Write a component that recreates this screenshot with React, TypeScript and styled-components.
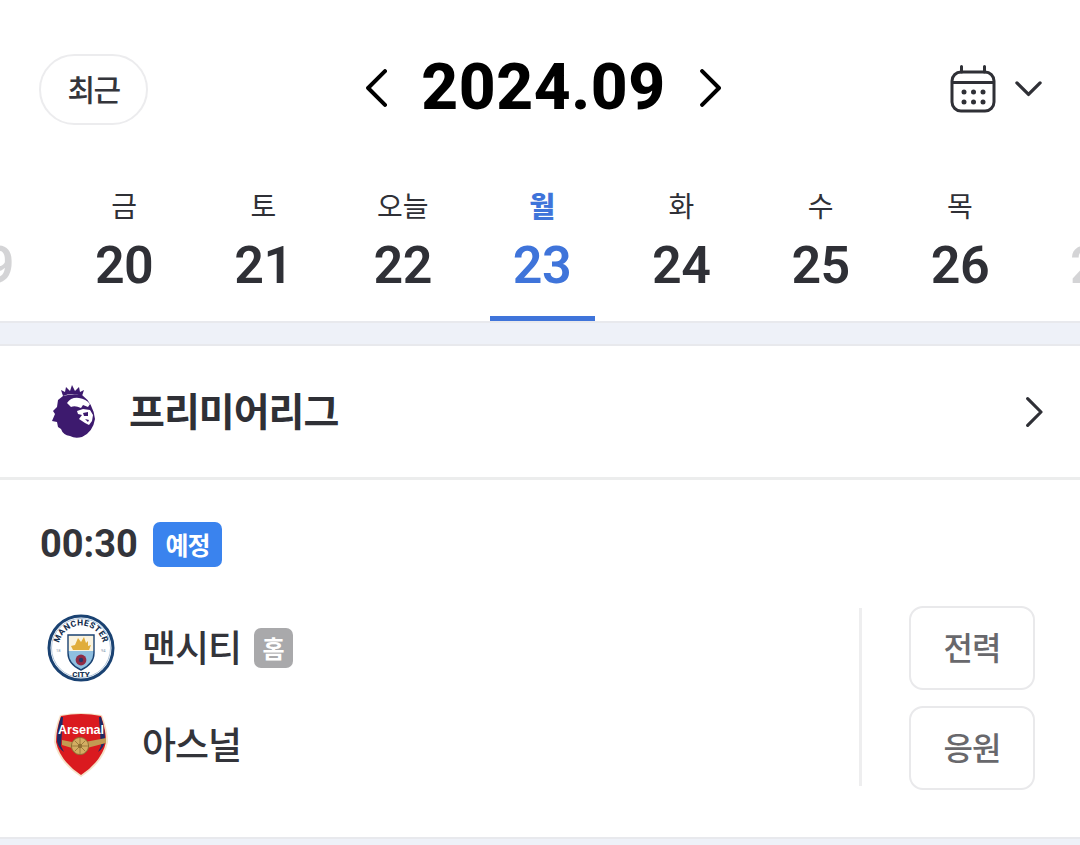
import React from 'react';
import styled, { createGlobalStyle } from 'styled-components';

const Global = createGlobalStyle`
  html, body { margin: 0; padding: 0; background: #fff; }
  body { font-family: Roboto, "Noto Sans CJK KR", sans-serif; width: 1080px; height: 845px; overflow: hidden; }
  * { box-sizing: border-box; }
`;

const Page = styled.div`
  width: 1080px;
  height: 845px;
  overflow: hidden;
  display: flex;
  flex-direction: column;
  background: #fff;
`;

const TopBar = styled.header`
  height: 178px;
  flex: none;
  padding: 54px 38px 0 39px;
  display: grid;
  grid-template-columns: 109px 1fr 92px;
  align-items: start;
`;

const RecentPill = styled.button`
  width: 109px;
  height: 71px;
  border: 2px solid #ececee;
  border-radius: 36px;
  background: #fff;
  color: #34353b;
  padding: 0 0 3px;
  font: 500 30px/1 "Noto Sans CJK KR", sans-serif;
  letter-spacing: -1.5px;
`;

const MonthNav = styled.div`
  display: flex;
  align-items: center;
  justify-content: center;
  height: 68px;
  gap: 34px;
  padding-right: 11px;
`;

const MonthTitle = styled.h1`
  margin: 0;
  font: 800 64px/68px Roboto, sans-serif;
  letter-spacing: 0.6px;
  color: #000;
`;

const CalendarControl = styled.div`
  display: flex;
  align-items: center;
  gap: 19px;
  height: 70px;
`;

const Strip = styled.nav`
  height: 143px;
  flex: none;
  display: flex;
  justify-content: center;
  padding-left: 4px;
  overflow: hidden;
`;

const DayCell = styled.div<{ $active?: boolean; $faded?: boolean }>`
  flex: 0 0 139.3px;
  height: 143px;
  display: flex;
  flex-direction: column;
  align-items: center;
  color: ${p => (p.$active ? '#3f74da' : '#2f3036')};
  opacity: ${p => (p.$faded ? 0.2 : 1)};
  position: relative;
`;

const DayName = styled.span<{ $active?: boolean }>`
  height: 40px;
  font: ${p => (p.$active ? 900 : 400)} 28px/40px "Noto Sans CJK KR", sans-serif;
  margin-top: 7px;
`;

const DayNumber = styled.span`
  font: 600 52px/60px Roboto, sans-serif;
  letter-spacing: -0.5px;
  margin-top: 11px;
`;

const ActiveBar = styled.i`
  position: absolute;
  left: 50%;
  bottom: 0;
  width: 105px;
  height: 5px;
  margin-left: -52.5px;
  background: #3f74da;
`;

const Band = styled.div<{ $h: number }>`
  height: ${p => p.$h}px;
  flex: none;
  background: #eef1f8;
  border-top: 2px solid #e8e9ed;
  border-bottom: 2px solid #e8e9ed;
`;

const LeagueRow = styled.section`
  height: 131px;
  flex: none;
  display: flex;
  align-items: center;
  padding: 0 37px 0 51px;
`;

const LeagueName = styled.h2`
  margin: 0 auto 0 33px;
  padding: 0 0 4px 1px;
  font: 700 39px/1 "Noto Sans CJK KR", sans-serif;
  letter-spacing: -1px;
  color: #2f3036;
`;

const Divider = styled.div`
  height: 3px;
  flex: none;
  background: #eceded;
`;

const Match = styled.section`
  height: 357px;
  flex: none;
  padding: 42px 45px 0 40px;
`;

const TimeRow = styled.div`
  display: flex;
  align-items: center;
  gap: 15px;
  height: 45px;
`;

const Time = styled.span`
  font: 700 38px/45px Roboto, sans-serif;
  color: #33343a;
`;

const StatusTag = styled.span`
  width: 69px;
  height: 45px;
  border-radius: 7px;
  background: #3a83ee;
  color: #fff;
  display: flex;
  align-items: center;
  justify-content: center;
  font: 700 25px/1 "Noto Sans CJK KR", sans-serif;
  letter-spacing: -1px;
`;

const MatchBody = styled.div`
  display: grid;
  grid-template-columns: 1fr 176px;
  margin-top: 41px;
`;

const Teams = styled.div`
  display: flex;
  flex-direction: column;
  gap: 31px;
  padding: 7px 0 0 7px;
  height: 180px;
`;

const Team = styled.div`
  display: flex;
  align-items: center;
  height: 66px;
`;

const CrestSlot = styled.div`
  width: 68px;
  display: flex;
  justify-content: center;
  flex: none;
`;

const TeamName = styled.span`
  margin-left: 27px;
  padding-bottom: 4px;
  font: 500 37px/1 "Noto Sans CJK KR", sans-serif;
  letter-spacing: -1px;
  color: #33343a;
`;

const HomeTag = styled.span`
  margin-left: 13px;
  width: 39px;
  height: 40px;
  border-radius: 7px;
  background: #a9a9ab;
  color: #fff;
  display: flex;
  align-items: center;
  justify-content: center;
  font: 700 24px/1 "Noto Sans CJK KR", sans-serif;
`;

const Actions = styled.div`
  border-left: 3px solid #eeeeef;
  height: 178px;
  padding-left: 47px;
  display: flex;
  flex-direction: column;
  gap: 16px;
`;

const ActionButton = styled.button`
  width: 126px;
  height: 84px;
  flex: none;
  border: 2px solid #e9e9eb;
  border-radius: 14px;
  background: #fff;
  color: #68686c;
  padding: 0 0 4px;
  font: 500 32px/1 "Noto Sans CJK KR", sans-serif;
  letter-spacing: -1px;
  &:first-child { margin-top: -2px; }
`;

const Chevron = ({ dir, size = 30, color = '#000' }: { dir: 'left' | 'right' | 'down'; size?: number; color?: string }) => {
  const d = dir === 'left' ? 'M18 2 L2 18 L18 34' : dir === 'right' ? 'M2 2 L18 18 L2 34' : 'M2 3 L14 15 L26 3';
  const vb = dir === 'down' ? '0 0 28 18' : '0 0 20 36';
  const w = dir === 'down' ? size : (size * 20) / 36;
  const h = dir === 'down' ? (size * 18) / 28 : size;
  return (
    <svg width={w} height={h} viewBox={vb} fill="none" stroke={color} strokeWidth={dir === 'down' ? 3.4 : 3.8} strokeLinecap="round" strokeLinejoin="round">
      <path d={d} />
    </svg>
  );
};

const CalendarIcon = () => (
  <svg width="46" height="48" viewBox="0 0 46 48" fill="none" stroke="#2f3036" strokeWidth="3">
    <rect x="2" y="7" width="42" height="39" rx="9" />
    <path d="M2 17.5 H44" />
    <path d="M11.5 1.5 V7 M34.5 1.5 V7" strokeLinecap="round" />
    <g fill="#2f3036" stroke="none">
      {[14, 23.5, 33].map(x => [27, 37].map(y => <circle key={`${x}-${y}`} cx={x} cy={y} r="2.5" />))}
    </g>
  </svg>
);

const LionLogo = () => (
  <svg width="44" height="54" viewBox="0 0 44 54">
    <path d="M10 5 L14 7 L15 2 L19 6 L21 0 L24 6 L28 2 L29 7 L33 5 L31 11 Q21 7 12 11 Z" fill="#3d1a6e" />
    <path d="M12 11 Q22 8 31 10 Q42 18 44 34 Q42 47 31 52 Q24 54 19 51 Q12 50 10 44 L7 42 L6 37 L1 36 L4 29 L2 26 L6 22 L7 15 Z" fill="#3d1a6e" />
    <path d="M16 18 Q20 12 28 13 Q35 14 39 19 L37 22 L32 20 L30 23 Q24 20 20 22 Z" fill="#fff" />
    <path d="M26 26 L32 24 L39 25 L42 30 L41 36 L38 40 L34 38 L28 34 L31 30 L27 29 Z" fill="#fff" />
    <path d="M32 28 L37 27 L37 31 L33 31 Z M34 34 L38 35 L37 37 Z" fill="#3d1a6e" />
  </svg>
);

const CityCrest = () => (
  <svg width="68" height="68" viewBox="0 0 68 68">
    <defs>
      <path id="mcTop" d="M11.5 34 A22.5 22.5 0 0 1 56.5 34" />
      <clipPath id="mcShield"><path d="M21 21 H47 V39 Q47 50 34 56 Q21 50 21 39 Z" /></clipPath>
    </defs>
    <circle cx="34" cy="34" r="32" fill="#fff" stroke="#1a4272" strokeWidth="3" />
    <circle cx="34" cy="34" r="29.5" fill="none" stroke="#9db8d2" strokeWidth="0.8" />
    <text fontFamily="Roboto, sans-serif" fontWeight="800" fontSize="8.4" fill="#16304f" letterSpacing="0.5">
      <textPath href="#mcTop" startOffset="50%" textAnchor="middle">MANCHESTER</textPath>
    </text>
    <text x="34" y="63" textAnchor="middle" fontFamily="Roboto, sans-serif" fontWeight="800" fontSize="8" fill="#16304f">CITY</text>
    <text x="9" y="38" fontFamily="Roboto, sans-serif" fontSize="4" fill="#7f97ad">18</text>
    <text x="54" y="38" fontFamily="Roboto, sans-serif" fontSize="4" fill="#7f97ad">94</text>
    <g clipPath="url(#mcShield)">
      <rect x="20" y="20" width="28" height="18" fill="#faf3df" />
      <rect x="20" y="37" width="28" height="21" fill="#8fbfe0" />
    </g>
    <path d="M21 21 H47 V39 Q47 50 34 56 Q21 50 21 39 Z" fill="none" stroke="#1a4272" strokeWidth="1.4" />
    <path d="M24 32 L26 36 H42 L44 31 L41 32 V27 L39 29 L37 23 L34 28 L31 24 L28 31 Z" fill="#e0ad3c" />
    <circle cx="34" cy="46" r="5.4" fill="#8f2b45" />
    <circle cx="34" cy="46" r="2.2" fill="#26396b" />
  </svg>
);

const ArsenalCrest = () => (
  <svg width="56" height="66" viewBox="0 0 56 66">
    <path d="M7 3 Q28 -1 49 3 Q55 18 55 30 Q51 50 28 65 Q5 50 1 30 Q1 18 7 3 Z" fill="#f5e2c8" />
    <path d="M8 4 Q28 0 48 4 Q53 18 53 30 Q49 49 28 63 Q7 49 3 30 Q3 18 8 4 Z" fill="#da1a1f" />
    <path d="M8 5 L10 5 L8 34 L11 40 Q5 36 4 29 Q4 16 8 5 Z M48 5 L46 5 L48 34 L45 40 Q51 36 52 29 Q52 16 48 5 Z" fill="#1e2a64" />
    <text x="28" y="22" textAnchor="middle" fontFamily="'Liberation Sans', sans-serif" fontWeight="700" fontSize="12.6" fill="#fff">Arsenal</text>
    <path d="M9 28 L19 30 H32 L53 26 V31 L34 36 H19 L9 33 Z" fill="#c29a52" />
    <circle cx="27" cy="34" r="8.6" fill="#d3ad63" stroke="#8f6e34" strokeWidth="1" />
    <circle cx="27" cy="34" r="2.2" fill="#8f6e34" />
    <path d="M27 26 V42 M19 34 H35 M21.5 28.5 L32.5 39.5 M32.5 28.5 L21.5 39.5" stroke="#8f6e34" strokeWidth="0.8" />
  </svg>
);

const days = [
  { name: '', num: '19', faded: true },
  { name: '금', num: '20' },
  { name: '토', num: '21' },
  { name: '오늘', num: '22' },
  { name: '월', num: '23', active: true },
  { name: '화', num: '24' },
  { name: '수', num: '25' },
  { name: '목', num: '26' },
  { name: '', num: '27', faded: true },
];

export default function App() {
  return (
    <Page>
      <Global />
      <TopBar>
        <RecentPill>최근</RecentPill>
        <MonthNav>
          <Chevron dir="left" size={38} />
          <MonthTitle>2024.09</MonthTitle>
          <Chevron dir="right" size={38} />
        </MonthNav>
        <CalendarControl>
          <CalendarIcon />
          <Chevron dir="down" size={27} color="#2f3036" />
        </CalendarControl>
      </TopBar>
      <Strip>
        {days.map(d => (
          <DayCell key={d.num} $active={d.active} $faded={d.faded}>
            <DayName $active={d.active}>{d.name}</DayName>
            <DayNumber>{d.num}</DayNumber>
            {d.active && <ActiveBar />}
          </DayCell>
        ))}
      </Strip>
      <Band $h={25} />
      <LeagueRow>
        <LionLogo />
        <LeagueName>프리미어리그</LeagueName>
        <Chevron dir="right" size={30} color="#2f3036" />
      </LeagueRow>
      <Divider />
      <Match>
        <TimeRow>
          <Time>00:30</Time>
          <StatusTag>예정</StatusTag>
        </TimeRow>
        <MatchBody>
          <Teams>
            <Team>
              <CrestSlot><CityCrest /></CrestSlot>
              <TeamName>맨시티</TeamName>
              <HomeTag>홈</HomeTag>
            </Team>
            <Team>
              <CrestSlot><ArsenalCrest /></CrestSlot>
              <TeamName>아스널</TeamName>
            </Team>
          </Teams>
          <Actions>
            <ActionButton>전력</ActionButton>
            <ActionButton>응원</ActionButton>
          </Actions>
        </MatchBody>
      </Match>
      <Band $h={12} />
    </Page>
  );
}
